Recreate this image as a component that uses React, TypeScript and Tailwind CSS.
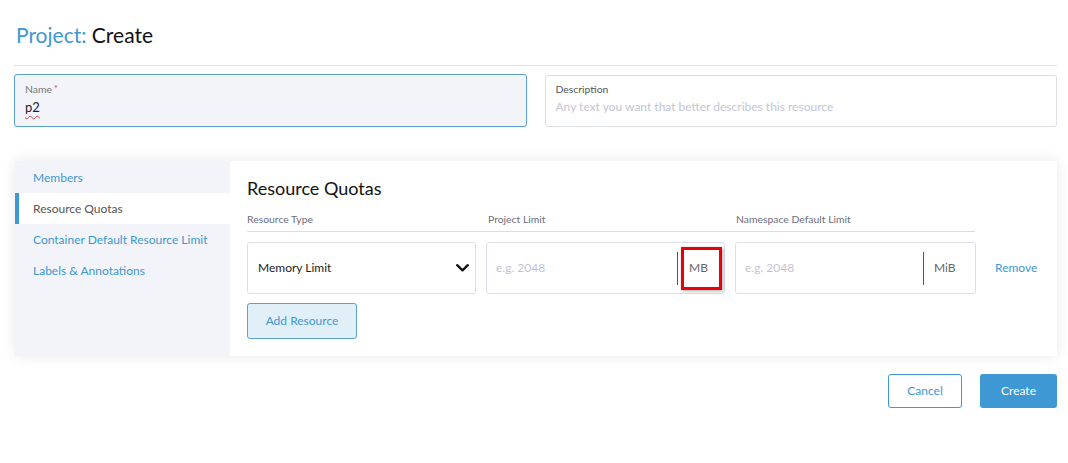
import React from "react";

function Chevron() {
  return (
    <svg width="13" height="8" viewBox="0 0 13 8" fill="none">
      <path d="M1.2 1.2 L6.5 6.3 L11.8 1.2" stroke="#111" strokeWidth="2.3" strokeLinecap="round" strokeLinejoin="round" />
    </svg>
  );
}

export default function App() {
  const items = [
    { label: "Members", active: false },
    { label: "Resource Quotas", active: true },
    { label: "Container Default Resource Limit", active: false },
    { label: "Labels & Annotations", active: false },
  ];
  return (
    <div className="w-[1068px] h-[463px] bg-white font-['Lato','Open_Sans',sans-serif] text-[#222] overflow-hidden">
      <div className="pl-[14px] pr-[11px]">
        <h1 className="pt-[21px] pl-[2px] text-[21px] leading-[28px]">
          <span className="text-[#3d98d3]">Project:</span> <span className="text-[#111]">Create</span>
        </h1>
        <div className="mt-[16px] border-t border-[#dcdee7]" />
        <div className="mt-[8px] grid grid-cols-2 items-start gap-[18px]">
          <div className="h-[53px] rounded-[3px] border border-[#5aa1d6] bg-[#f3f4f9] pl-[10px] pt-[7px]">
            <div className="text-[10.4px] leading-[14px] text-[#777]">
              Name<span className="text-[#e0414a] text-[9px] align-top ml-[2px]">*</span>
            </div>
            <div className="mt-[2px] text-[13px] leading-[18px] text-[#222]">
              <span className="underline decoration-wavy decoration-[#e0414a] decoration-1 underline-offset-[3px]">p2</span>
            </div>
          </div>
          <div className="h-[52px] mt-px rounded-[3px] border border-[#dcdee7] bg-white pl-[10px] pt-[6px]">
            <div className="text-[10.4px] leading-[14px] text-[#555]">Description</div>
            <div className="mt-[2px] text-[12px] leading-[18px] text-[#c3c5d3]">
              Any text you want that better describes this resource
            </div>
          </div>
        </div>

        <div className="mt-[34px] ml-px flex h-[195px] shadow-[0_0_14px_rgba(0,0,0,0.09)]">
          <div className="w-[215px] bg-[#f3f4f9] pt-px">
            {items.map((it) => (
              <div
                key={it.label}
                className={
                  it.active
                    ? "h-[31px] flex items-center border-l-4 border-[#3d98d3] bg-white pl-[14px] text-[12px] text-[#555]"
                    : "h-[31px] flex items-center border-l-4 border-transparent pl-[14px] text-[12px] text-[#3d98d3]"
                }
              >
                {it.label}
              </div>
            ))}
          </div>
          <div className="flex-1 bg-white pl-[17px] pt-[15px]">
            <div className="text-[18px] leading-[24px] text-[#111]">Resource Quotas</div>
            <div className="mt-[12px] flex w-[728px] gap-[10px] border-b border-[#dcdee7] pb-[5px] text-[10.4px] leading-[14px] text-[#6d6d7d]">
              <div className="w-[229px]">Resource Type</div>
              <div className="w-[239px] pl-[2px]">Project Limit</div>
              <div className="w-[240px] pl-px">Namespace Default Limit</div>
            </div>
            <div className="mt-[10px] flex items-center gap-[10px]">
              <div className="h-[52px] w-[229px] flex items-center justify-between rounded-[3px] border border-[#dcdee7] pl-[10px] pr-[6px] text-[12px] text-[#222]">
                <span>Memory Limit</span>
                <Chevron />
              </div>
              <div className="h-[52px] w-[239px] flex items-center rounded-[3px] border border-[#dcdee7] text-[12px]">
                <div className="flex-1 pl-[9px] text-[#c3c5d3]">e.g. 2048</div>
                <div className="h-[33px] w-px bg-[#555]" />
                <div className="ml-[3px] mr-[2px] h-[43px] w-[41px] flex items-center border-[3px] border-[#e8000b] pl-[5px] text-[#666] shadow-[1px_1px_3px_rgba(0,0,0,0.35)]">
                  MB
                </div>
              </div>
              <div className="h-[52px] w-[241px] flex items-center rounded-[3px] border border-[#dcdee7] text-[12px]">
                <div className="flex-1 pl-[9px] text-[#c3c5d3]">e.g. 2048</div>
                <div className="h-[33px] w-px bg-[#555]" />
                <div className="w-[51px] pl-[10px] text-[#666]">MiB</div>
              </div>
              <div className="ml-[9px] text-[12px] text-[#3d98d3]">Remove</div>
            </div>
            <div className="mt-[9px] h-[36px] w-[110px] flex items-center justify-center rounded-[3px] border border-[#5aa1d6] bg-[#e1eff9] text-[12px] text-[#3d98d3]">
              Add Resource
            </div>
          </div>
        </div>

        <div className="mt-[18px] flex justify-end gap-[18px]">
          <div className="h-[34px] w-[74px] flex items-center justify-center rounded-[3px] border border-[#3d98d3] text-[12px] text-[#3d98d3]">
            Cancel
          </div>
          <div className="h-[34px] w-[77px] flex items-center justify-center rounded-[3px] bg-[#3d98d3] text-[12px] text-white">
            Create
          </div>
        </div>
      </div>
    </div>
  );
}
